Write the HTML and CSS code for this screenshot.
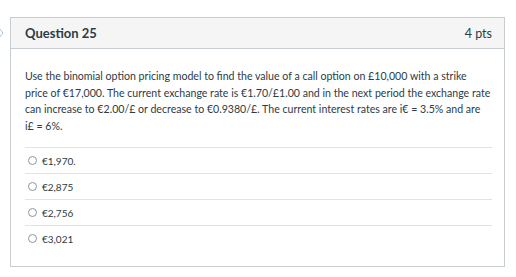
FILE: index.html
```html
<!DOCTYPE html>
<html lang="en">
<head>
    <meta charset="UTF-8">
    <meta name="viewport" content="width=device-width, initial-scale=1.0">
    <title>Question 25</title>
    <link rel="stylesheet" href="styles.css">
</head>
<body>
    <div class="page">
        <div class="flag">
            <svg width="6" height="12" viewBox="0 0 6 12"><path d="M0.5 0.5 L5 6 L0.5 11.5" fill="none" stroke="#a9c2d6" stroke-width="1"/></svg>
        </div>
        <div class="question">
            <div class="header">
                <h2>Question 25</h2>
                <span class="pts">4 pts</span>
            </div>
            <div class="content">
                <p class="text">Use the binomial option pricing model to find the value of a call option on £10,000 with a strike price of €17,000. The current exchange rate is €1.70/£1.00 and in the next period the exchange rate can increase to €2.00/£ or decrease to €0.9380/£. The current interest rates are i€ = 3.5% and are <span class="nowrap">i£ = 6%.</span></p>
                <div class="answers">
                    <label class="answer"><span class="radio"></span>€1,970.</label>
                    <label class="answer"><span class="radio"></span>€2,875</label>
                    <label class="answer"><span class="radio"></span>€2,756</label>
                    <label class="answer"><span class="radio"></span>€3,021</label>
                </div>
            </div>
        </div>
    </div>
</body>
</html>
```

FILE: styles.css
```css
body {
    font-family: Lato, "Open Sans", sans-serif;
    margin: 0;
    padding: 0;
    background-color: #fff;
    color: #2d3b45;
}
.page {
    display: flex;
    padding-top: 17px;
}
.flag {
    width: 10px;
    padding-top: 10px;
}
.flag svg {
    display: block;
    margin-left: -2px;
}
.question {
    width: 493px;
    border: 1px solid #c7cdd1;
}
.header {
    display: flex;
    justify-content: space-between;
    align-items: center;
    height: 30px;
    padding: 0 12px 0 14px;
    background-color: #f5f5f5;
    border-bottom: 1px solid #c7cdd1;
}
.header h2 {
    margin: 0;
    font-size: 13px;
    font-weight: bold;
}
.pts {
    font-size: 12.5px;
}
.content {
    padding: 19px 12px 14px 14px;
}
.text {
    margin: 0 0 13px;
    font-size: 10.6px;
    line-height: 16.6px;
}
.nowrap {
    white-space: nowrap;
}
.answers {
    border-bottom: 1px solid #fff;
}
.answer {
    display: flex;
    align-items: center;
    height: 25px;
    font-size: 10px;
    border-top: 1px solid #e3e3e3;
}
.radio {
    width: 7px;
    height: 7px;
    border: 1px solid #8b969e;
    border-radius: 50%;
    margin: 0 5px 0 3px;
}
```
